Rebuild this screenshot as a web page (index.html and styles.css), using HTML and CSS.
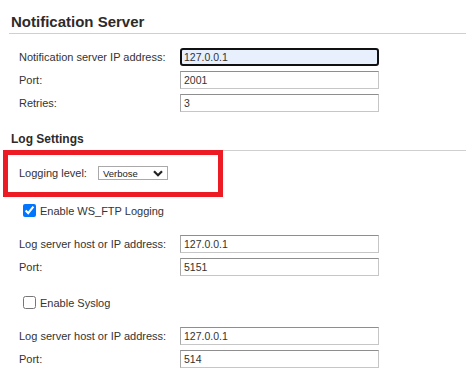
FILE: index.html
```html
<!DOCTYPE html>
<html lang="en">
<head>
  <meta charset="UTF-8" />
  <title>Server settings</title>
  <link rel="stylesheet" href="styles.css">
</head>
<body>
  <section class="panel">
    <h2 class="title">Notification Server</h2>
    <div class="fields first">
      <div class="field">
        <label class="label">Notification server IP address:</label>
        <div class="input focused">127.0.0.1</div>
      </div>
      <div class="field">
        <label class="label">Port:</label>
        <div class="input">2001</div>
      </div>
      <div class="field">
        <label class="label">Retries:</label>
        <div class="input">3</div>
      </div>
    </div>
  </section>

  <section class="panel">
    <h3 class="title small">Log Settings</h3>

    <div class="level-row">
      <label class="label">Logging level:</label>
      <div class="select">
        <span>Verbose</span>
        <svg class="chevron" width="10" height="7" viewBox="0 0 10 7">
          <path d="M1 1.2 L5 5.2 L9 1.2" fill="none" stroke="#222" stroke-width="2.2"/>
        </svg>
      </div>
    </div>

    <label class="check first-check">
      <input type="checkbox" checked>
      <span>Enable WS_FTP Logging</span>
    </label>

    <div class="fields">
      <div class="field">
        <label class="label">Log server host or IP address:</label>
        <div class="input">127.0.0.1</div>
      </div>
      <div class="field">
        <label class="label">Port:</label>
        <div class="input">5151</div>
      </div>
    </div>

    <label class="check second-check">
      <input type="checkbox">
      <span>Enable Syslog</span>
    </label>

    <div class="fields">
      <div class="field">
        <label class="label">Log server host or IP address:</label>
        <div class="input">127.0.0.1</div>
      </div>
      <div class="field">
        <label class="label">Port:</label>
        <div class="input">514</div>
      </div>
    </div>
  </section>
</body>
</html>
```

FILE: styles.css
```css
body {
  margin: 0;
  background: #fff;
  font-family: "Liberation Sans", Arial, sans-serif;
  font-size: 11px;
  color: #333;
  overflow: hidden;
}

.title {
  margin: 13px 0 0 9px;
  padding: 0 0 2px 2px;
  font-size: 15px;
  line-height: 18px;
  font-weight: bold;
  color: #2e2a2a;
  border-bottom: 1px solid #cfcfcf;
}

.title.small {
  margin-top: 19px;
  font-size: 12px;
  line-height: 16px;
  padding-bottom: 3px;
}

.fields {
  display: flex;
  flex-direction: column;
  gap: 5px;
  padding-left: 19px;
  margin-top: 18px;
}

.fields.first {
  margin-top: 14px;
}

.field {
  display: flex;
  align-items: center;
  height: 18px;
}

.label {
  width: 161px;
  flex: none;
  color: #333;
}

.input {
  box-sizing: border-box;
  width: 199px;
  height: 18px;
  padding: 0 3px;
  line-height: 16px;
  font-size: 10.5px;
  color: #333;
  border: 1px solid #c6c6c6;
  border-top-color: #8e8e8e;
  border-left-color: #a8a8a8;
}

.input.focused {
  border: 2px solid #111;
  border-radius: 3px;
  background: #e8f0fe;
  padding: 0 2px;
  line-height: 14px;
}

.level-row {
  display: flex;
  align-items: center;
  width: 220px;
  box-sizing: border-box;
  margin: -1px 0 0 3px;
  padding: 11px 0 12px 11px;
  border: 5px solid #ed1c24;
}

.level-row .label {
  width: auto;
  margin-right: 11px;
}

.select {
  box-sizing: border-box;
  width: 70px;
  height: 14px;
  display: flex;
  align-items: center;
  justify-content: space-between;
  padding: 0 4px 0 4px;
  font-size: 9.5px;
  color: #222;
  border: 1px solid #a9a9a9;
}

.chevron {
  display: block;
}

.check {
  display: flex;
  align-items: center;
  padding-left: 19px;
  font-size: 11px;
  color: #333;
}

.check input {
  width: 13px;
  height: 13px;
  margin: 0 4px 0 4px;
}

.first-check {
  margin-top: 7px;
}

.second-check {
  margin-top: 20px;
}
```
